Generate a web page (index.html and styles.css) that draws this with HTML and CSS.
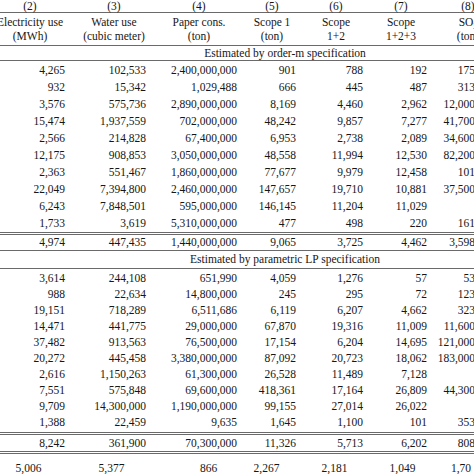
FILE: index.html
```html
<!DOCTYPE html>
<html>
<head>
<meta charset="utf-8">
<link rel="stylesheet" href="styles.css">
</head>
<body>
<div class="frame">
<div class="tbl">
  <div class="row nums"><span>(2)</span><span>(3)</span><span>(4)</span><span>(5)</span><span>(6)</span><span>(7)</span><span>(8)</span></div>
  <div class="row head"><span>Electricity use<br>(MWh)</span><span>Water use<br>(cubic meter)</span><span>Paper cons.<br>(ton)</span><span>Scope 1<br>(ton)</span><span>Scope<br>1+2</span><span>Scope<br>1+2+3</span><span>SO<sub>2</sub><br>(ton)</span></div>
  <div class="spanrow sp1">Estimated by order-m specification</div>
  <div class="block b1">
    <div class="row data"><span>4,265</span><span>102,533</span><span>2,400,000,000</span><span>901</span><span>788</span><span>192</span><span>175</span></div>
    <div class="row data"><span>932</span><span>15,342</span><span>1,029,488</span><span>666</span><span>445</span><span>487</span><span>313</span></div>
    <div class="row data"><span>3,576</span><span>575,736</span><span>2,890,000,000</span><span>8,169</span><span>4,460</span><span>2,962</span><span>12,000</span></div>
    <div class="row data"><span>15,474</span><span>1,937,559</span><span>702,000,000</span><span>48,242</span><span>9,857</span><span>7,277</span><span>41,700</span></div>
    <div class="row data"><span>2,566</span><span>214,828</span><span>67,400,000</span><span>6,953</span><span>2,738</span><span>2,089</span><span>34,600</span></div>
    <div class="row data"><span>12,175</span><span>908,853</span><span>3,050,000,000</span><span>48,558</span><span>11,994</span><span>12,530</span><span>82,200</span></div>
    <div class="row data"><span>2,363</span><span>551,467</span><span>1,860,000,000</span><span>77,677</span><span>9,979</span><span>12,458</span><span>101</span></div>
    <div class="row data"><span>22,049</span><span>7,394,800</span><span>2,460,000,000</span><span>147,657</span><span>19,710</span><span>10,881</span><span>37,500</span></div>
    <div class="row data"><span>6,243</span><span>7,848,501</span><span>595,000,000</span><span>146,145</span><span>11,204</span><span>11,029</span><span></span></div>
    <div class="row data"><span>1,733</span><span>3,619</span><span>5,310,000,000</span><span>477</span><span>498</span><span>220</span><span>161</span></div>
  </div>
  <div class="row data mean1"><span>4,974</span><span>447,435</span><span>1,440,000,000</span><span>9,065</span><span>3,725</span><span>4,462</span><span>3,598</span></div>
  <div class="spanrow sp2">Estimated by parametric LP specification</div>
  <div class="block b2">
    <div class="row data"><span>3,614</span><span>244,108</span><span>651,990</span><span>4,059</span><span>1,276</span><span>57</span><span>53</span></div>
    <div class="row data"><span>988</span><span>22,634</span><span>14,800,000</span><span>245</span><span>295</span><span>72</span><span>123</span></div>
    <div class="row data"><span>19,151</span><span>718,289</span><span>6,511,686</span><span>6,119</span><span>6,207</span><span>4,662</span><span>323</span></div>
    <div class="row data"><span>14,471</span><span>441,775</span><span>29,000,000</span><span>67,870</span><span>19,316</span><span>11,009</span><span>11,600</span></div>
    <div class="row data"><span>37,482</span><span>913,563</span><span>76,500,000</span><span>17,154</span><span>6,204</span><span>14,695</span><span>121,000</span></div>
    <div class="row data"><span>20,272</span><span>445,458</span><span>3,380,000,000</span><span>87,092</span><span>20,723</span><span>18,062</span><span>183,000</span></div>
    <div class="row data"><span>2,616</span><span>1,150,263</span><span>61,300,000</span><span>26,528</span><span>11,489</span><span>7,128</span><span></span></div>
    <div class="row data"><span>7,551</span><span>575,848</span><span>69,600,000</span><span>418,361</span><span>17,164</span><span>26,809</span><span>44,300</span></div>
    <div class="row data"><span>9,709</span><span>14,300,000</span><span>1,190,000,000</span><span>99,155</span><span>27,014</span><span>26,022</span><span></span></div>
    <div class="row data"><span>1,388</span><span>22,459</span><span>9,635</span><span>1,645</span><span>1,100</span><span>101</span><span>353</span></div>
  </div>
  <div class="row data mean2"><span>8,242</span><span>361,900</span><span>70,300,000</span><span>11,326</span><span>5,713</span><span>6,202</span><span>808</span></div>
  <div class="row last"><span>5,006</span><span>5,377</span><span>866</span><span>2,267</span><span>2,181</span><span>1,049</span><span>1,70</span></div>
</div>
</div>
</body>
</html>
```
FILE: styles.css
```css
html, body {
  margin: 0;
  padding: 0;
  background: #ffffff;
}
.frame {
  width: 474px;
  height: 474px;
  overflow: hidden;
}
.tbl {
  margin-left: -12px;
  width: 516px;
  font-family: "Liberation Serif", "Times New Roman", serif;
  font-size: 11.5px;
  color: #161616;
}
.row {
  display: grid;
  grid-template-columns: 84px 84px 86px 60px 68px 62px 72px;
}
.row > span {
  white-space: nowrap;
}
.nums {
  height: 12px;
  line-height: 12px;
  border-bottom: 1px solid #6a6a6a;
  text-align: center;
}
.head {
  padding: 2px 0;
  line-height: 14px;
  text-align: center;
  border-bottom: 1px solid #6a6a6a;
}
.head sub {
  font-size: 8px;
  line-height: 0;
}
.spanrow {
  text-align: center;
  padding-left: 78px;
  border-bottom: 1px solid #6a6a6a;
  white-space: nowrap;
}
.sp1 {
  height: 14px;
  line-height: 14px;
}
.sp2 {
  height: 17px;
  line-height: 17px;
}
.data {
  text-align: right;
}
.data > span:nth-child(1) { padding-right: 7px; }
.data > span:nth-child(2) { padding-right: 10px; }
.data > span:nth-child(3) { padding-right: 5px; }
.data > span:nth-child(4) { padding-right: 6px; }
.data > span:nth-child(5) { padding-right: 7px; }
.data > span:nth-child(6) { padding-right: 5px; }
.data > span:nth-child(7) { padding-right: 29px; }
.b1 {
  padding-top: 1px;
  border-bottom: 3px double #6a6a6a;
}
.b1 .data {
  height: 17px;
  line-height: 17px;
}
.b2 {
  padding-top: 1px;
  padding-bottom: 2px;
  border-bottom: 3px double #6a6a6a;
}
.b2 .data {
  height: 16px;
  line-height: 16px;
}
.mean1 {
  height: 15px;
  line-height: 15px;
  border-bottom: 1px solid #6a6a6a;
}
.mean2 {
  height: 16px;
  line-height: 16px;
  border-bottom: 3px double #6a6a6a;
}
.last {
  padding-top: 6px;
  line-height: 16px;
  text-align: center;
}
.last > span:nth-child(1) { padding-right: 3px; }
.last > span:nth-child(2) { padding-right: 5px; }
.last > span:nth-child(3) { padding-left: 19px; }
.last > span:nth-child(4) { padding-right: 11px; }
.last > span:nth-child(5) { padding-right: 3px; }
.last > span:nth-child(6) { padding-left: 3px; }
.last > span:nth-child(7) { padding-right: 14px; }
```
